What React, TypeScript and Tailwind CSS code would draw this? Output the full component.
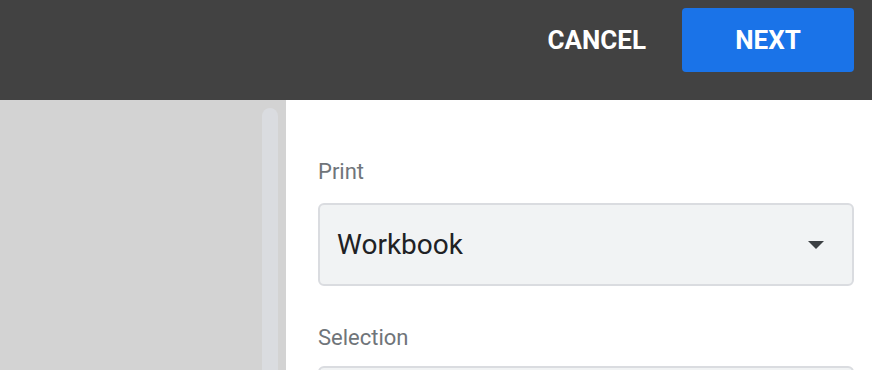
export default function App() {
  return (
    <div className="w-[872px] h-[370px] overflow-hidden flex flex-col" style={{ fontFamily: "Roboto, 'Liberation Sans', sans-serif" }}>
      <div className="h-[100px] shrink-0 bg-[#424242] flex items-start justify-end pt-[8px] pr-[18px]">
        <button className="h-[64px] px-[26px] text-white text-[26px] font-bold mr-[10px]">CANCEL</button>
        <button className="h-[64px] w-[172px] rounded-[4px] bg-[#1a73e8] text-white text-[26px] font-bold">NEXT</button>
      </div>
      <div className="flex flex-1">
        <div className="w-[286px] bg-[#d3d3d3] flex justify-end pr-[8px] pt-[8px]">
          <div className="w-[16px] h-full rounded-t-full bg-[#dadce0]"></div>
        </div>
        <div className="flex-1 bg-white pl-[32px] pr-[18px] pt-[59px]">
          <div className="text-[22px] text-[#70757a] leading-[26px]">Print</div>
          <div className="mt-[18px] h-[83px] rounded-[6px] border-2 border-[#dadce0] bg-[#f1f3f4] flex items-center justify-between pl-[17px] pr-[28px]">
            <span className="text-[28px] text-[#202124]">Workbook</span>
            <svg width="16" height="8" viewBox="0 0 16 8"><path d="M0 0h16L8 8z" fill="#3c4043" /></svg>
          </div>
          <div className="mt-[39px] text-[22px] text-[#70757a] leading-[26px]">Selection</div>
          <div className="mt-[15px] h-[83px] rounded-[6px] border-2 border-[#dadce0] bg-[#f1f3f4]"></div>
        </div>
      </div>
    </div>
  );
}
